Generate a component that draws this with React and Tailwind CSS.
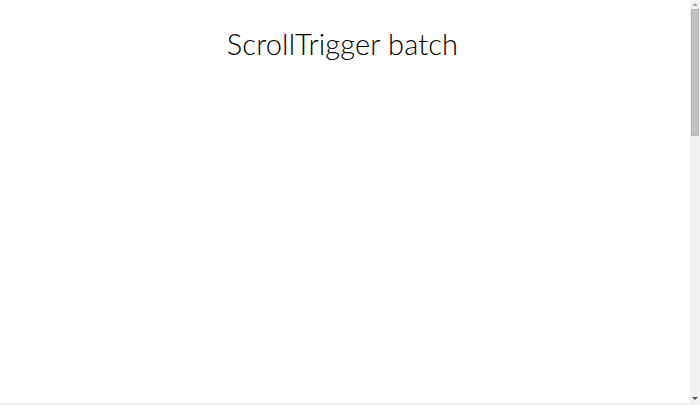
function ScrollRail() {
    // thin always-visible scroll rail on the right edge
    return (
        <div className="fixed top-0 right-0 w-[10px] h-screen bg-[#f1f1f1] flex flex-col items-center">
            <div className="mt-[3px] w-0 h-0 border-x-[3px] border-x-transparent border-b-[3px] border-b-[#a3a3a3]" />
            <div className="mt-[3px] w-[8px] h-[127px] bg-[#c1c1c1] border border-[#b5b5b5]" />
            <div className="mt-auto mb-[5px] w-0 h-0 border-x-[3px] border-x-transparent border-t-[3px] border-t-[#505050]" />
        </div>
    );
}

export default function App() {
    return (
        <div className="bg-white pr-[10px]" style={{ fontFamily: "Lato, 'Noto Sans', sans-serif" }}>
            <header className="h-[403px] flex justify-center pr-[5px]">
                <h1 className="mt-[26px] text-[29px] leading-[36px] font-light tracking-[0.005em] text-black">
                    ScrollTrigger batch
                </h1>
            </header>
            {/* the batch grid area below the fold */}
            <section className="h-[770px] bg-[#efefef]" />
            <ScrollRail />
        </div>
    );
}
